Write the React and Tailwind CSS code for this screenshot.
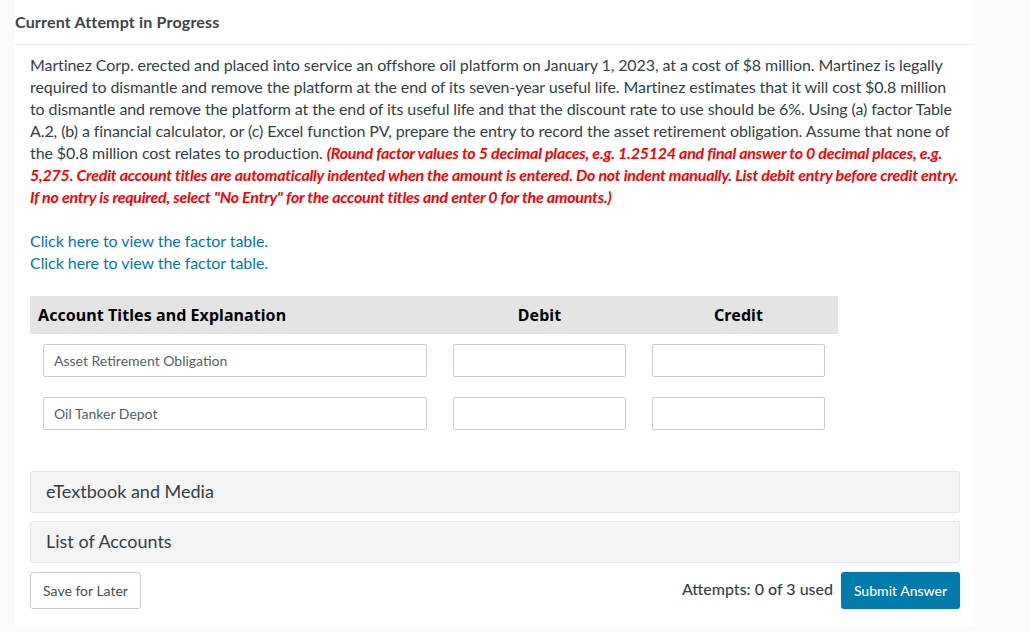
const rows = ["Asset Retirement Obligation", "Oil Tanker Depot"];

export default function App() {
  return (
    <div className="h-[632px] bg-[#fafafa] font-['Lato',sans-serif] overflow-hidden">
      <div className="w-[960px] h-[626px] ml-[15px] bg-white">
        {/* Header */}
        <div className="h-[45px] border-b border-[#eeeeee] flex items-center">
          <h2 className="text-[16px] tracking-[0.18px] font-bold text-[#3d4449]">Current Attempt in Progress</h2>
        </div>

        <div className="px-[15px]">
          {/* Question */}
          <p className="mt-[9px] text-[16px] leading-[22px] tracking-[-0.09px] text-[#333f48]">
            Martinez Corp. erected and placed into service an offshore oil platform on January 1, 2023, at a cost of $8
            million. Martinez is legally required to dismantle and remove the platform at the end of its seven-year
            useful life. Martinez estimates that it will cost $0.8 million to dismantle and remove the platform at the
            end of its useful life and that the discount rate to use should be 6%. Using (a) factor Table A.2, (b) a
            financial calculator, or (c) Excel function PV, prepare the entry to record the asset retirement obligation.
            Assume that none of the $0.8 million cost relates to production.{" "}
            <strong className="italic font-bold text-[#ff0000] tracking-[-0.25px]">
              (Round factor values to 5 decimal places, e.g. 1.25124 and final answer to 0 decimal places, e.g. 5,275.
              Credit account titles are automatically indented when the amount is entered. Do not indent manually. List
              debit entry before credit entry. If no entry is required, select "No Entry" for the account titles and
              enter 0 for the amounts.)
            </strong>
          </p>

          <div className="mt-[22px] text-[16px] leading-[22px] tracking-[-0.06px] text-[#007aab]">
            <a className="block">Click here to view the factor table.</a>
            <a className="block">Click here to view the factor table.</a>
          </div>

          {/* Journal entry table */}
          <div className="w-[808px] mt-[22px]">
            <div className="h-[38px] bg-[#e4e4e4] grid grid-cols-[410px_199px_199px] items-center text-[16px] tracking-[0.07px] font-bold text-black font-['Noto_Sans',sans-serif]">
              <div className="pl-2">Account Titles and Explanation</div>
              <div className="text-center">Debit</div>
              <div className="text-center">Credit</div>
            </div>
            <div className="mt-[10px] flex flex-col gap-[20px]">
              {rows.map((row) => (
                <div key={row} className="flex pl-[13px] gap-[26px]">
                  <div className="w-[384px] h-[33px] border border-[#cccccc] rounded-[2px] flex items-center pl-[10px] text-[14px] text-[#555f66]">
                    {row}
                  </div>
                  <div className="w-[173px] h-[33px] border border-[#cccccc] rounded-[2px]"></div>
                  <div className="w-[173px] h-[33px] border border-[#cccccc] rounded-[2px]"></div>
                </div>
              ))}
            </div>
          </div>

          {/* Accordions */}
          <div className="mt-[41px] flex flex-col gap-[8px]">
            <div className="h-[42px] bg-[#f4f4f4] border border-[#e6e6e6] rounded-[3px] flex items-center pl-[15px] pb-[2px] text-[18px] text-[#333f48]">
              eTextbook and Media
            </div>
            <div className="h-[42px] bg-[#f4f4f4] border border-[#e6e6e6] rounded-[3px] flex items-center pl-[15px] pb-[2px] text-[18px] text-[#333f48]">
              List of Accounts
            </div>
          </div>

          {/* Footer */}
          <div className="mt-[9px] flex items-center">
            <button className="w-[111px] h-[37px] bg-white border border-[#cccccc] rounded-[3px] text-[14px] text-[#444f57]">
              Save for Later
            </button>
            <span className="ml-auto mb-[3px] text-[16px] font-medium text-[#333f48]">Attempts: 0 of 3 used</span>
            <button className="ml-[8px] w-[119px] h-[37px] bg-[#007aab] rounded-[3px] text-[14px] font-medium text-white">
              Submit Answer
            </button>
          </div>
        </div>
      </div>
    </div>
  );
}
